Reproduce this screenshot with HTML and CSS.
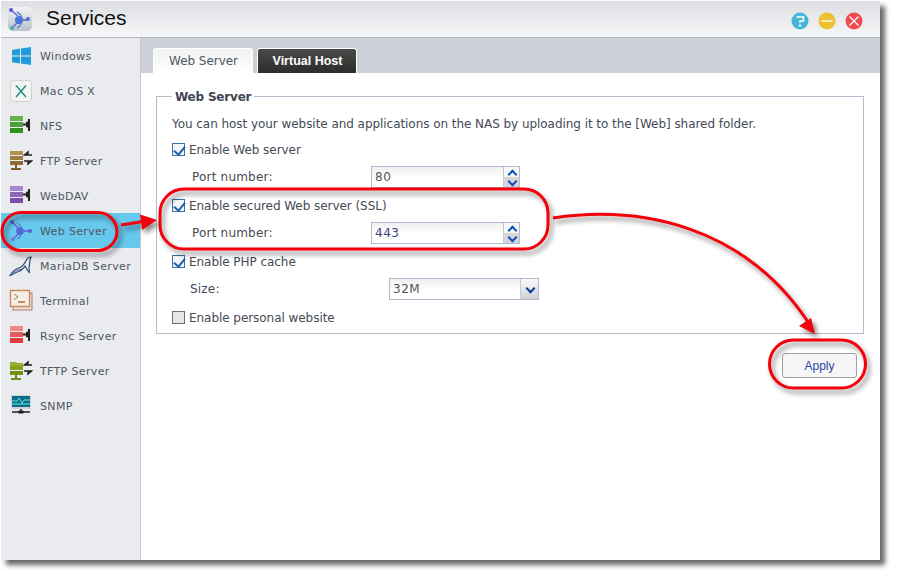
FILE: index.html
```html
<!DOCTYPE html>
<html lang="en">
<head>
<meta charset="utf-8">
<title>Services</title>
<link rel="stylesheet" href="styles.css">
</head>
<body>
<div class="stage">
  <div class="window">
    <header class="titlebar">
      <svg class="app-icon" viewBox="0 0 26 26" width="26" height="26">
        <defs><linearGradient id="ai" x1="0" y1="0" x2="0" y2="1"><stop offset="0" stop-color="#f2f3f5"/><stop offset="1" stop-color="#b9c0c8"/></linearGradient></defs>
        <rect x="1" y="1" width="24" height="24" rx="5" fill="url(#ai)"/>
        <path d="M4 4L11 10M20 14H14M5 22L10 17" stroke="#5a67c8" stroke-width="1.4" fill="none"/>
        <path d="M10 6A9 9 0 0 1 10 22" stroke="#5a8fd0" stroke-width="1.5" fill="none"/>
        <circle cx="12" cy="14" r="4" fill="#4a76d8"/>
        <circle cx="4" cy="4" r="2" fill="#6a50c8"/>
        <circle cx="21" cy="13" r="2" fill="#4a70d0"/>
        <circle cx="5" cy="22" r="2" fill="#3cb0c0"/>
      </svg>
      <h1 class="title">Services</h1>
      <div class="controls">
        <svg viewBox="0 0 18 18" width="18" height="18"><circle cx="9" cy="9" r="8.5" fill="#45b7d3"/><path d="M5.5 5H12.5V9H9V11" stroke="#fff" stroke-width="1.5" fill="none"/><rect x="8" y="12.5" width="2" height="2" fill="#fff"/></svg>
        <svg viewBox="0 0 18 18" width="18" height="18"><circle cx="9" cy="9" r="8.5" fill="#eec030"/><path d="M3.5 9H14.5" stroke="#fff" stroke-width="1.3"/></svg>
        <svg viewBox="0 0 18 18" width="18" height="18"><circle cx="9" cy="9" r="8.5" fill="#f04a50"/><path d="M4.5 4.5L13.5 13.5M13.5 4.5L4.5 13.5" stroke="#fff" stroke-width="1.2"/></svg>
      </div>
    </header>
    <div class="body">
      <nav class="sidebar">
        <a class="item">
          <svg viewBox="0 0 24 24" width="24" height="24"><path d="M3 6L11 4.6V11.5H3ZM12 4.4L22 3V11.5H12ZM3 12.5H11V19.6L3 18.2ZM12 12.5H22V21L12 19.6Z" fill="#1f9bdc"/></svg>
          <span>Windows</span>
        </a>
        <a class="item">
          <svg viewBox="0 0 24 24" width="24" height="24"><rect x="1.5" y="1.5" width="21" height="21" rx="3.5" fill="#f3f4f2" stroke="#cfd2d2"/><path d="M7 6.5L17 18M17 6.5L7 18" stroke="#138a78" stroke-width="1.3"/></svg>
          <span>Mac OS X</span>
        </a>
        <a class="item">
          <svg viewBox="0 0 24 24" width="24" height="24"><rect x="1" y="2" width="13" height="5" fill="#68b048"/><rect x="1" y="8" width="13" height="5" fill="#4ca038"/><rect x="1" y="14" width="13" height="5" fill="#309020"/><path d="M14 10.5H20M20 5V17" stroke="#222" stroke-width="2"/><path d="M17 8V13L20 14V7Z" fill="#222"/></svg>
          <span>NFS</span>
        </a>
        <a class="item">
          <svg viewBox="0 0 24 24" width="24" height="24"><rect x="1" y="2" width="13" height="4" fill="#b09050"/><rect x="1" y="7" width="13" height="4" fill="#9c7c40"/><rect x="1" y="12" width="13" height="4" fill="#8c6c30"/><path d="M7 16V20M2 20H12" stroke="#7c5c28" stroke-width="2"/><path d="M15 6H23M19 3L15.5 6L19 6ZM15 12H23M19 15L22.5 12L19 12Z" stroke="#222" stroke-width="1.5" fill="#222"/></svg>
          <span>FTP Server</span>
        </a>
        <a class="item">
          <svg viewBox="0 0 24 24" width="24" height="24"><rect x="1" y="2" width="13" height="5" fill="#a888cc"/><rect x="1" y="8" width="13" height="5" fill="#8c68b8"/><rect x="1" y="14" width="13" height="5" fill="#7850a8"/><path d="M14 10.5H20M20 5V17" stroke="#222" stroke-width="2"/><path d="M17 8V13L20 14V7Z" fill="#222"/></svg>
          <span>WebDAV</span>
        </a>
        <a class="item active">
          <svg viewBox="0 0 24 24" width="24" height="24"><path d="M3 3L10 10M21 12H14M5 19L10 14" stroke="#5a5cd0" stroke-width="1.3" fill="none"/><path d="M8 4A9 9 0 0 1 8 20" stroke="#5a7cd8" stroke-width="1.4" fill="none"/><circle cx="11" cy="12" r="3.8" fill="#5268d8"/><circle cx="3" cy="3" r="2" fill="#5a5cd0"/><circle cx="21" cy="12" r="2" fill="#5060d0"/><circle cx="4" cy="20" r="2" fill="#5a80d8"/></svg>
          <span>Web Server</span>
        </a>
        <a class="item">
          <svg viewBox="0 0 24 24" width="24" height="24"><path d="M1 21.500C3 18 6 15 10 14C14 13 16 9 18 5C19 3.500 21 3 22 3L21 6C21 9 20 11 20 15L20.500 19L18 15.500L16 12C14 16 9 18 6 19C4 20 3 21 1 21.500Z" fill="none" stroke="#2c4a78" stroke-width="1.2"/><path d="M4 19C7 16 10 16 13 15" fill="none" stroke="#2c4a78" stroke-width=".8"/></svg>
          <span>MariaDB Server</span>
        </a>
        <a class="item">
          <svg viewBox="0 0 24 24" width="24" height="24"><rect x="4" y="4" width="19" height="17" fill="#e8e0dc" stroke="#b89080" stroke-width="1.2"/><rect x="1.5" y="1.5" width="19" height="16" fill="#f4eee8" stroke="#cc8858" stroke-width="1.4"/><path d="M5 5L9 8L5 10.5" stroke="#984" stroke-width="1" fill="none"/><path d="M9 13H16" stroke="#c06840" stroke-width="1.6"/></svg>
          <span>Terminal</span>
        </a>
        <a class="item">
          <svg viewBox="0 0 24 24" width="24" height="24"><rect x="1" y="2" width="13" height="5" fill="#f08888"/><rect x="1" y="8" width="13" height="5" fill="#e85858"/><rect x="1" y="14" width="13" height="5" fill="#e03c3c"/><path d="M14 10.5H20M20 5V17" stroke="#222" stroke-width="2"/><path d="M17 8V13L20 14V7Z" fill="#222"/></svg>
          <span>Rsync Server</span>
        </a>
        <a class="item">
          <svg viewBox="0 0 24 24" width="24" height="24"><path d="M1 3H7L8 4H14V7H1Z" fill="#98b030"/><rect x="1" y="7" width="13" height="4" fill="#84a020"/><rect x="1" y="12" width="13" height="4" fill="#749010"/><path d="M7 16V20M2 20H12" stroke="#6c8c18" stroke-width="2"/><path d="M15 6H23M19 3L15.5 6L19 6ZM15 12H23M19 15L22.5 12L19 12Z" stroke="#222" stroke-width="1.5" fill="#222"/></svg>
          <span>TFTP Server</span>
        </a>
        <a class="item">
          <svg viewBox="0 0 24 24" width="24" height="24"><rect x="2" y="1" width="20" height="14" fill="#d0d4d8"/><rect x="3" y="2" width="18" height="11" fill="#0c6c88"/><path d="M3 7H8L10 4L13 9L15 6H21" stroke="#5ce0e0" fill="none"/><rect x="3" y="9" width="18" height="2" fill="#30b0b8"/><path d="M12 15V18M3 18H21" stroke="#222" stroke-width="1.6"/><rect x="9" y="16.5" width="6" height="3" rx="1.5" fill="#222"/></svg>
          <span>SNMP</span>
        </a>
      </nav>
      <main class="content">
        <div class="tabs">
          <button class="tab selected">Web Server</button>
          <button class="tab dark">Virtual Host</button>
        </div>
        <section class="panel">
          <fieldset class="group">
            <legend>Web Server</legend>
            <p class="intro">You can host your website and applications on the NAS by uploading it to the [Web] shared folder.</p>
            <div class="row check-row"><span class="check on"></span>Enable Web server</div>
            <div class="row field-row">
              <span class="field-label">Port number:</span>
              <div class="input"><span class="value">80</span><span class="spin"></span></div>
            </div>
            <div class="row check-row"><span class="check on"></span>Enable secured Web server (SSL)</div>
            <div class="row field-row">
              <span class="field-label">Port number:</span>
              <div class="input"><span class="value strong">443</span><span class="spin"></span></div>
            </div>
            <div class="row check-row"><span class="check on"></span>Enable PHP cache</div>
            <div class="row field-row size-row">
              <span class="field-label">Size:</span>
              <div class="input select"><span class="value">32M</span><span class="drop"></span></div>
            </div>
            <div class="row check-row"><span class="check"></span>Enable personal website</div>
          </fieldset>
          <div class="actions"><button class="apply">Apply</button></div>
        </section>
      </main>
    </div>
  </div>
  <svg class="annotations" viewBox="0 0 900 580" width="900" height="580">
    <defs>
      <filter id="sh" x="-10%" y="-10%" width="120%" height="125%">
        <feDropShadow dx="3" dy="4" stdDeviation="2.5" flood-color="#000" flood-opacity=".45"/>
      </filter>
    </defs>
    <g filter="url(#sh)" fill="none" stroke="#f20008" stroke-width="3">
      <rect x="2" y="212.500" width="115" height="38" rx="19"/>
      <rect x="160" y="189" width="388" height="60" rx="24"/>
      <rect x="769.500" y="340" width="96" height="48" rx="24"/>
      <path d="M121 225L143 221.500"/>
      <path d="M553 218C640 205 745 225 810 325"/>
    </g>
    <g filter="url(#sh)" fill="#f20008">
      <path d="M140 214.500L157 220L142 230Z"/>
      <path d="M799 326L811 318L815 334Z"/>
    </g>
  </svg>
</div>
</body>
</html>
```
FILE: styles.css
```css
* { box-sizing: border-box; }
html, body { margin: 0; padding: 0; }
body { width: 900px; height: 580px; overflow: hidden; background: #fff; font-family: "DejaVu Sans", sans-serif; font-size: 11px; letter-spacing: .35px; color: #444a55; }
.stage { position: relative; width: 900px; height: 580px; padding: 1px 0 0 1px; }
.window { width: 879px; height: 559px; background: #fff; display: flex; flex-direction: column; box-shadow: 5px 5px 5px rgba(0,0,0,.6); }
.titlebar { height: 37px; flex: none; display: flex; align-items: center; padding: 0 17px 0 6px; background: linear-gradient(#dcdee2, #f6f7f8); border-bottom: 1px solid #b4b8bd; }
.app-icon { flex: none; }
.title { margin: 0 0 2px 13px; font: normal 21px "Liberation Sans", sans-serif; letter-spacing: 0; color: #111; }
.controls { margin: 4px 0 0 auto; display: flex; gap: 9px; }
.controls svg { display: block; }
.body { flex: 1; display: flex; min-height: 0; }
.sidebar { width: 140px; flex: none; background: #e9ebef; border-right: 1px solid #c8ccd2; display: flex; flex-direction: column; }
.item { height: 35px; flex: none; display: flex; align-items: center; gap: 7px; padding-left: 8px; color: #505662; }
.item svg { flex: none; }
.item span { padding-top: 2px; }
.item.active { background: #67c8ee; }
.content { flex: 1; display: flex; flex-direction: column; background: #cdd0d7; min-width: 0; }
.tabs { height: 35px; flex: none; display: flex; align-items: flex-end; gap: 4px; padding-left: 12px; }
.tab { width: 100px; height: 25px; padding: 0 0 0 1px; font: inherit; font-size: 12px; letter-spacing: -.05px; border: 1px solid #fff; border-bottom: 0; border-radius: 3px 3px 0 0; }
.tab.selected { background: linear-gradient(#f1f2f3, #fff); color: #505662; }
.tab.dark { background: linear-gradient(#4a4a4a, #2c2c2c); color: #fff; font: bold 12.500px "Liberation Sans", sans-serif; letter-spacing: 0; }
.panel { flex: 1; background: #fff; padding: 15px 16px 0 15px; }
.group { margin: 0; padding: 0 0 0 15px; height: 246px; border: 1px solid #b8bbcc; display: flex; flex-direction: column; }
.group legend { margin-left: 0; padding: 2px 3px 0; font-weight: bold; font-size: 12px; letter-spacing: -.2px; color: #3e4450; }
.intro { margin: 0; flex: none; height: 30px; padding-top: 13px; font-size: 12px; line-height: 14px; letter-spacing: -.05px; }
.row { display: flex; flex: none; align-items: center; font-size: 12px; letter-spacing: -.05px; height: 27px; }
.check-row { margin-top: 2px; }
.field-row { padding-left: 20px; }
.size-row { padding-left: 18px; }
.field-label { width: 179px; flex: none; letter-spacing: .2px; }
.size-row .field-label { width: 199px; }
.check { width: 13px; height: 13px; flex: none; margin-right: 4px; border: 1px solid #6a7078; background: #e6e6e6; }
.check.on { border-color: #3a70a8; background: #f4f7fa; position: relative; }
.check.on::after { content: ""; position: absolute; left: 3px; top: 0; width: 5px; height: 9px; border: solid #1c5ea8; border-width: 0 2px 2px 0; transform: rotate(40deg); }
.input { width: 149px; height: 22px; flex: none; display: flex; align-items: center; border: 1px solid #b4b8cc; background: linear-gradient(#f0f0f0, #fff 60%); position: relative; }
.select { width: 150px; }
.value { padding-left: 3px; color: #555; font-size: 12px; letter-spacing: .5px; }
.value.strong { color: #3c4480; }
.spin, .drop { position: absolute; right: 0; top: 0; bottom: 0; width: 16px; background: linear-gradient(#f8f8f8 50%, #d4d6da 50%); border-left: 1px solid #c4c8d4; }
.spin::before, .spin::after, .drop::after { content: ""; position: absolute; left: 5px; width: 5px; height: 5px; border: solid #0a50c0; border-width: 2px 0 0 2px; }
.spin::before { top: 4px; transform: rotate(45deg); }
.spin::after { top: 11px; transform: rotate(225deg); }
.drop { width: 18px; background: linear-gradient(#fafafa, #cfd1d6); }
.drop::after { top: 6px; left: 6px; transform: rotate(225deg); border-color: #0a3c90; }
.actions { display: flex; justify-content: flex-end; padding: 19px 7px 0 0; }
.apply { width: 75px; height: 25px; padding: 0; font: 12px "Liberation Sans", "Open Sans", sans-serif; color: #2a48a8; background: #f6f6f6; border: 1px solid #a0a0a0; border-radius: 3px; }
.annotations { position: absolute; left: 0; top: 0; pointer-events: none; }
```
